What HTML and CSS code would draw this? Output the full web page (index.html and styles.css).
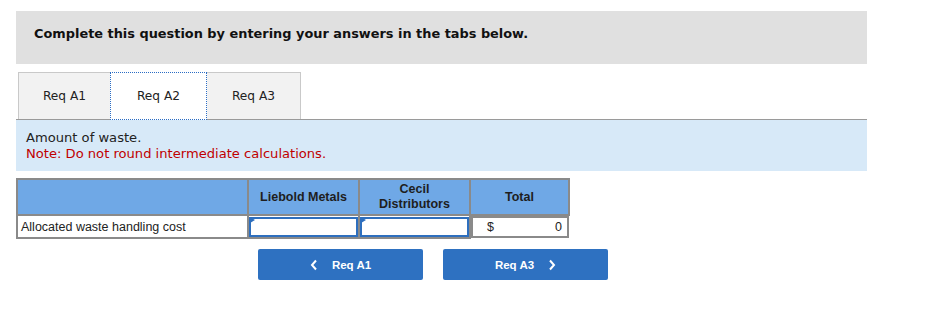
FILE: index.html
```html
<!DOCTYPE html>
<html lang="en">
<head>
  <meta charset="UTF-8">
  <title>Req A2</title>
  <link rel="stylesheet" href="styles.css">
</head>
<body>
  <div class="wrap">
    <!-- Instructions -->
    <div class="prompt">Complete this question by entering your answers in the tabs below.</div>

    <!-- Tabs -->
    <ul class="tabs">
      <li class="tab">Req A1</li>
      <li class="tab active">Req A2</li>
      <li class="tab last">Req A3</li>
    </ul>

    <div class="info">
      <p>Amount of waste.</p>
      <p class="note">Note: Do not round intermediate calculations.</p>
    </div>

    <!-- Answer table -->
    <table class="answers">
      <thead>
        <tr>
          <th class="col-label"></th>
          <th class="col-in">Liebold Metals</th>
          <th class="col-in">Cecil<br>Distributors</th>
          <th class="col-total">Total</th>
        </tr>
      </thead>
      <tbody>
        <tr>
          <td>Allocated waste handling cost</td>
          <td class="input-cell"><span class="field"></span></td>
          <td class="input-cell"><span class="field"></span></td>
          <td class="total"><span>$</span><span>0</span></td>
        </tr>
      </tbody>
    </table>

    <!-- Navigation -->
    <div class="nav">
      <button type="button" class="nav-btn">
        <svg viewBox="0 0 8 12"><polyline points="6,1.5 2,6 6,10.5"/></svg>
        Req A1
      </button>
      <button type="button" class="nav-btn">
        Req A3
        <svg viewBox="0 0 8 12"><polyline points="2,1.5 6,6 2,10.5"/></svg>
      </button>
    </div>
  </div>
</body>
</html>
```

FILE: styles.css
```css
* {
  box-sizing: border-box;
}

body {
  margin: 0;
  background: #fff;
  font-family: "DejaVu Sans", Verdana, sans-serif;
  color: #222;
}

.wrap {
  padding: 11px 0 0 16px;
  width: 867px;
}

/* Instructions */
.prompt {
  height: 53px;
  background: #e0e0e0;
  padding: 15px 18px 0;
  font-size: 12.9px;
  font-weight: bold;
  color: #111;
}

/* Tabs */
.tabs {
  list-style: none;
  display: flex;
  margin: 8px 0 0;
  padding: 0 0 0 2px;
  border-bottom: 1px solid #9a9a9a;
}

.tab {
  width: 93px;
  height: 47px;
  display: flex;
  align-items: center;
  justify-content: center;
  background: #f2f2f2;
  border: 1px solid #c9c9c9;
  border-bottom: none;
  font-size: 12.2px;
  margin-right: -1px;
}

.tab.last {
  width: 95px;
}

.tab.active {
  background: #fff;
  border: 1px dotted #2b6dc4;
  width: 97px;
  position: relative;
  z-index: 1;
  margin-bottom: -1px;
  height: 48px;
}

/* Info box */
.info {
  background: #d7e9f8;
  height: 51px;
  padding: 10px 10px 0;
  font-size: 13.1px;
  line-height: 16px;
}

.info p {
  margin: 0;
}

.note {
  color: #c00000;
}

/* Table */
.answers {
  margin-top: 7px;
  border-collapse: collapse;
  font-family: "Liberation Sans", Arial, sans-serif;
  font-size: 12.5px;
}

.answers th,
.answers td {
  border: 2px solid #8a8a8a;
  padding: 0;
}

.answers th {
  background: #6fa8e6;
  height: 36px;
  font-weight: bold;
  line-height: 15px;
  color: #1e1e1e;
}

.col-label { width: 231px; }
.col-in { width: 111px; }
.col-total { width: 99px; }

.answers td {
  height: 22px;
  padding: 0 3px;
}

.answers td.input-cell {
  padding: 0;
  position: relative;
}

.field {
  display: block;
  height: 20px;
  border: 2px solid #2e6fbe;
  background: #fff;
}

/* small marker at top-left of inputs */
.input-cell::before {
  content: "";
  position: absolute;
  left: 1px;
  top: 1px;
  border-top: 3.5px solid transparent;
  border-bottom: 3.5px solid transparent;
  border-left: 5px solid #2e6fbe;
}

.total {
  display: flex;
  justify-content: space-between;
  align-items: center;
  padding: 0 5px 0 14px !important;
}

/* Nav buttons */
.nav {
  display: flex;
  gap: 20px;
  margin: 10px 0 0 242px;
}

.nav-btn {
  width: 165px;
  height: 31px;
  background: #2e71c1;
  border: none;
  border-radius: 2px;
  color: #fff;
  font-family: "Liberation Sans", Arial, sans-serif;
  font-size: 11.5px;
  font-weight: bold;
  display: flex;
  align-items: center;
  justify-content: center;
  gap: 14px;
  padding: 0;
}

.nav-btn svg {
  width: 8px;
  height: 12px;
  fill: none;
  stroke: #fff;
  stroke-width: 2;
}
```
